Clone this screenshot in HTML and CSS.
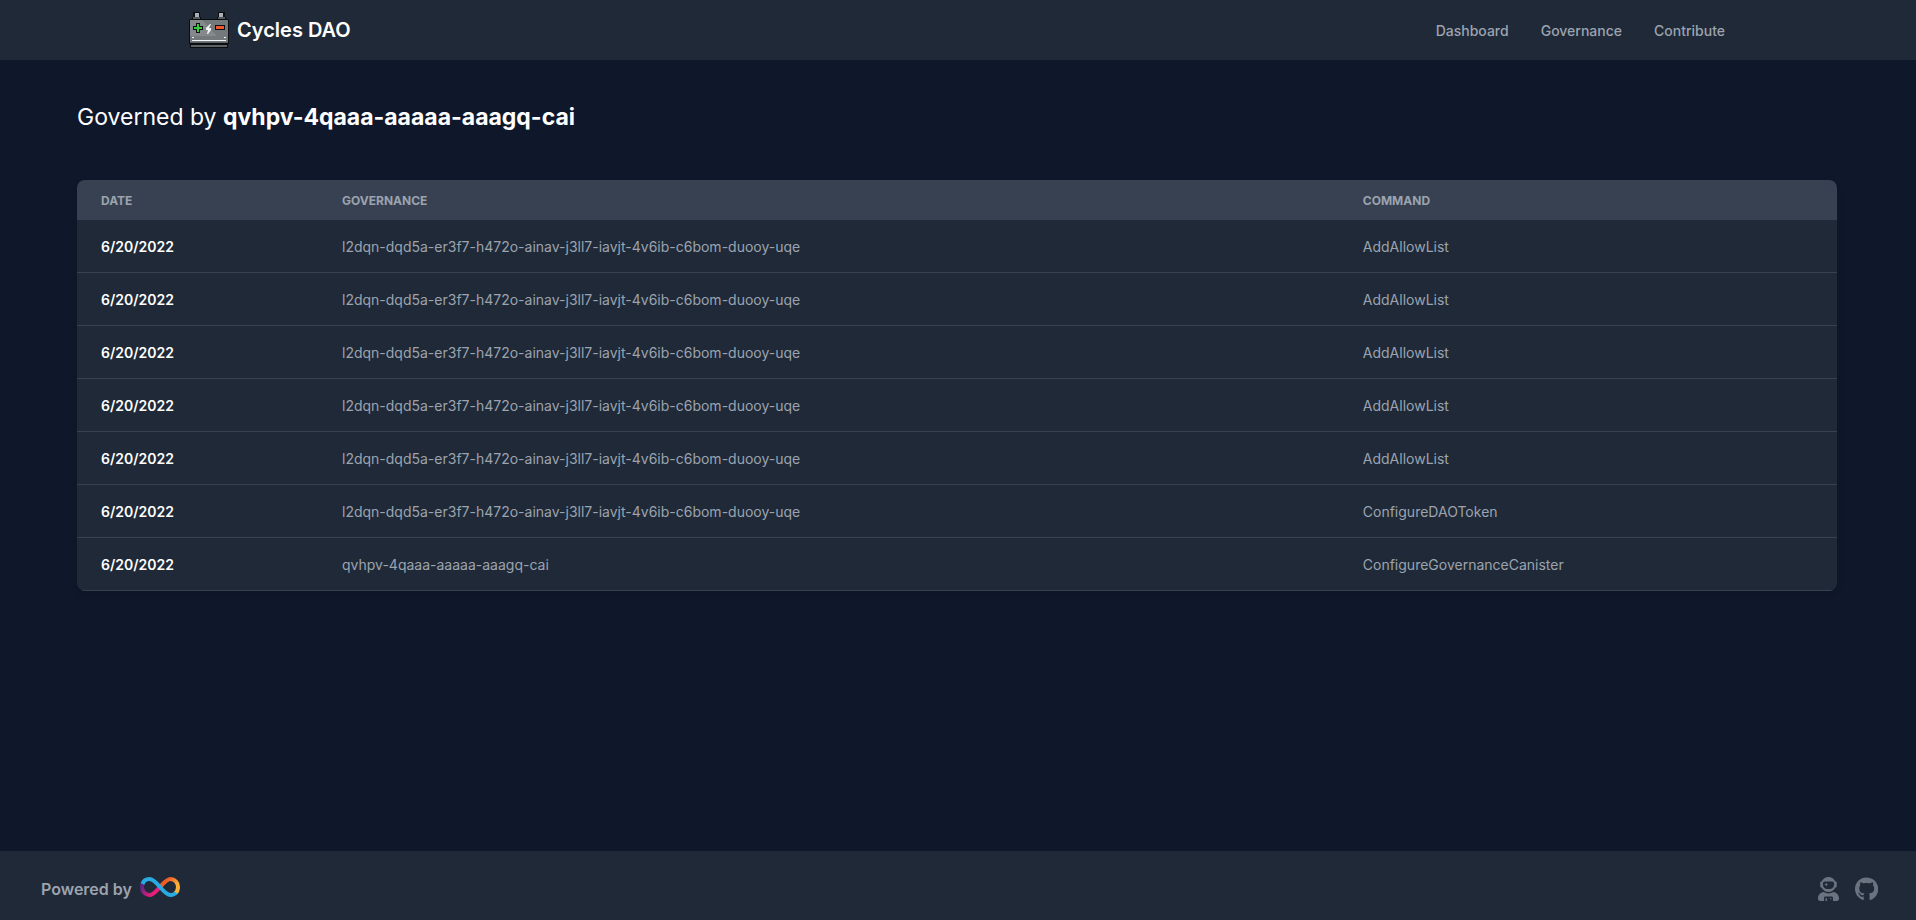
FILE: index.html
```html
<!DOCTYPE html>
<html lang="en">
<head>
    <meta charset="utf-8">
    <meta name="viewport" content="width=device-width, initial-scale=1">
    <title>Cycles DAO</title>
    <link rel="stylesheet" href="styles.css">
</head>
<body>
    <header class="navbar">
        <div class="navbar-inner">
            <a href="#" class="brand">
                <svg class="brand-logo" viewBox="0 0 40 36" aria-hidden="true">
                    <path fill="#0b0d10" d="M4 0h7v5h1v3H3V5h1zM29 0h7v5h1v3h-9V5h1zM1 7h38l1 1v24h-1v4H1v-4H0V8z"/>
                    <path fill="#a9b1b5" d="M6 1h4v4H6zM30 1h4v4h-4z"/>
                    <path fill="#53595d" d="M4 5h7v2H4zM29 5h7v2h-7z"/>
                    <path fill="#74797c" d="M1 8h38v23H1z"/>
                    <path fill="#85898b" d="M1 8h12l15 16H1z"/>
                    <path fill="#5d6264" d="M1 30h38v1H1zM2 33h36v2H2z"/>
                    <path fill="#0b0d10" d="M7 11h4v3h3v4h-3v3H7v-3H4v-4h3zM26 13h10v5H26z"/>
                    <path fill="#35cf3b" d="M8 12h2v3h3v2h-3v3H8v-3H5v-2h3z"/>
                    <path fill="#f0582a" d="M27 14h8v3h-8z"/>
                    <path fill="#f4f5f5" d="M21 12h1l-2 4h2v2l-3 4h-1l1-4h-2v-2zM3 25h2v1H3zM35 25h2v1h-2zM3 28h34v1H3z"/>
                </svg>
                <span>Cycles DAO</span>
            </a>
            <nav class="nav-links">
                <a href="#">Dashboard</a>
                <a href="#">Governance</a>
                <a href="#">Contribute</a>
            </nav>
        </div>
    </header>

    <main class="content">
        <h1 class="title">Governed by <strong>qvhpv-4qaaa-aaaaa-aaagq-cai</strong></h1>
        <div class="table-wrap">
            <table class="history">
                <thead>
                    <tr>
                        <th scope="col" class="col-date">Date</th>
                        <th scope="col" class="col-governance">Governance</th>
                        <th scope="col">Command</th>
                    </tr>
                </thead>
                <tbody>
                    <tr>
                        <th scope="row">6/20/2022</th>
                        <td>l2dqn-dqd5a-er3f7-h472o-ainav-j3ll7-iavjt-4v6ib-c6bom-duooy-uqe</td>
                        <td>AddAllowList</td>
                    </tr>
                    <tr>
                        <th scope="row">6/20/2022</th>
                        <td>l2dqn-dqd5a-er3f7-h472o-ainav-j3ll7-iavjt-4v6ib-c6bom-duooy-uqe</td>
                        <td>AddAllowList</td>
                    </tr>
                    <tr>
                        <th scope="row">6/20/2022</th>
                        <td>l2dqn-dqd5a-er3f7-h472o-ainav-j3ll7-iavjt-4v6ib-c6bom-duooy-uqe</td>
                        <td>AddAllowList</td>
                    </tr>
                    <tr>
                        <th scope="row">6/20/2022</th>
                        <td>l2dqn-dqd5a-er3f7-h472o-ainav-j3ll7-iavjt-4v6ib-c6bom-duooy-uqe</td>
                        <td>AddAllowList</td>
                    </tr>
                    <tr>
                        <th scope="row">6/20/2022</th>
                        <td>l2dqn-dqd5a-er3f7-h472o-ainav-j3ll7-iavjt-4v6ib-c6bom-duooy-uqe</td>
                        <td>AddAllowList</td>
                    </tr>
                    <tr>
                        <th scope="row">6/20/2022</th>
                        <td>l2dqn-dqd5a-er3f7-h472o-ainav-j3ll7-iavjt-4v6ib-c6bom-duooy-uqe</td>
                        <td>ConfigureDAOToken</td>
                    </tr>
                    <tr>
                        <th scope="row">6/20/2022</th>
                        <td>qvhpv-4qaaa-aaaaa-aaagq-cai</td>
                        <td>ConfigureGovernanceCanister</td>
                    </tr>
                </tbody>
            </table>
        </div>
    </main>

    <footer class="footer">
        <a href="#" class="powered">
            <span>Powered by</span>
            <svg class="infinity" viewBox="0 0 40 20" fill="none" stroke-width="4" aria-label="Internet Computer">
                <defs>
                    <linearGradient id="orange" x1="22" y1="2" x2="38" y2="16" gradientUnits="userSpaceOnUse">
                        <stop offset=".2" stop-color="#f15a24"/>
                        <stop offset=".7" stop-color="#fbb03b"/>
                    </linearGradient>
                    <linearGradient id="pink" x1="18" y1="18" x2="2" y2="4" gradientUnits="userSpaceOnUse">
                        <stop offset=".2" stop-color="#ed1e79"/>
                        <stop offset=".9" stop-color="#522785"/>
                    </linearGradient>
                </defs>
                <path stroke="url(#pink)" d="M20 10C17 13 13.500 18 9.500 18A7.500 8 0 0 1 2 10C2 7.500 3 5 5 3.500"/>
                <path stroke="url(#orange)" d="M20 10C23 7 26.500 2 30.500 2A7.500 8 0 0 1 38 10C38 12.500 37 15 35 16.500"/>
                <path stroke="#29abe2" d="M2.500 7C3.500 4 6 2 9.500 2C17 2 23 18 30.500 18C33 18 35 17 36 15.500"/>
            </svg>
        </a>
        <div class="social">
            <a href="#" aria-label="Profile">
                <svg viewBox="0 0 448 512" fill="currentColor"><path d="M64 224h13.500c24.700 56.500 80.900 96 146.500 96s121.800-39.500 146.500-96H384c8.800 0 16-7.200 16-16v-96c0-8.800-7.200-16-16-16h-13.500C345.800 39.500 289.600 0 224 0S102.200 39.500 77.500 96H64c-8.800 0-16 7.200-16 16v96c0 8.800 7.200 16 16 16zm40-88c0-22.100 21.500-40 48-40h144c26.500 0 48 17.900 48 40v24c0 53-43 96-96 96h-48c-53 0-96-43-96-96v-24zm72 72l12-36 36-12-36-12-12-36-12 36-36 12 36 12 12 36zm151.600 113.400C297.700 340.700 262.200 352 224 352s-73.700-11.300-103.600-30.600C52.900 328.500 0 385 0 453.400v10.600c0 26.500 21.500 48 48 48h80v-64c0-17.700 14.300-32 32-32h128c17.700 0 32 14.300 32 32v64h80c26.500 0 48-21.500 48-48v-10.600c0-68.400-52.900-124.900-120.400-132zM272 448c-8.800 0-16 7.200-16 16s7.200 16 16 16 16-7.200 16-16-7.200-16-16-16zm-96 0c-8.800 0-16 7.200-16 16v48h32v-48c0-8.800-7.200-16-16-16z"/></svg>
            </a>
            <a href="#" aria-label="GitHub">
                <svg viewBox="0 0 496 512" fill="currentColor"><path d="M244.800 8C106.100 8 0 113.300 0 252c0 110.900 69.800 205.800 169.500 239.200 12.800 2.300 17.300-5.600 17.300-12.100 0-6.200-.3-40.400-.3-61.400 0 0-70 15-84.700-29.800 0 0-11.400-29.100-27.800-36.600 0 0-22.900-15.700 1.600-15.400 0 0 24.900 2 38.600 25.800 21.900 38.600 58.600 27.500 72.900 20.900 2.300-16 8.800-27.100 16-33.700-55.900-6.200-112.300-14.300-112.300-110.500 0-27.500 7.600-41.300 23.600-58.900-2.600-6.500-11.100-33.300 2.600-67.900 20.900-6.500 69 27 69 27 20-5.600 41.500-8.500 62.800-8.500s42.800 2.900 62.800 8.500c0 0 48.100-33.600 69-27 13.700 34.700 5.200 61.400 2.600 67.900 16 17.700 25.800 31.500 25.800 58.900 0 96.500-58.900 104.200-114.800 110.500 9.200 7.900 17 22.900 17 46.400 0 33.700-.3 75.400-.3 83.600 0 6.500 4.600 14.400 17.300 12.100C428.200 457.800 496 362.900 496 252 496 113.300 383.500 8 244.800 8z"/></svg>
            </a>
        </div>
    </footer>
</body>
</html>
```
FILE: styles.css
```css
* {
    box-sizing: border-box;
}

body {
    display: flex;
    flex-direction: column;
    min-height: 100vh;
    margin: 0;
    background-color: #0f172a;
    color: #9ca3af;
    font-family: Inter, "Liberation Sans", sans-serif;
    font-size: 14px;
    line-height: 20px;
}

a {
    color: inherit;
    text-decoration: none;
}

svg {
    display: block;
}

/* header */
.navbar {
    padding: 12px 18px 12px 16px;
    background-color: #1f2937;
}

.navbar-inner {
    display: flex;
    align-items: center;
    justify-content: space-between;
    max-width: 1536px;
    margin: 0 auto;
}

.brand {
    display: flex;
    align-items: center;
    gap: 8px;
    color: #fff;
    font-size: 20px;
    font-weight: 600;
    line-height: 28px;
}

.brand-logo {
    width: 40px;
    height: 36px;
}

.nav-links {
    display: flex;
    gap: 32px;
    padding-top: 2px;
    font-weight: 500;
}

/* governance history */
.content {
    flex: 1;
    padding: 41px 79px 40px 77px;
}

.title {
    margin: 0 0 47px;
    color: #fff;
    font-size: 23px;
    font-weight: 400;
    line-height: 32px;
}

.title strong {
    font-weight: 700;
}

.table-wrap {
    overflow: hidden;
    border-radius: 8px;
    box-shadow: 0 4px 6px rgba(0, 0, 0, 0.1);
}

.history {
    width: 100%;
    border-collapse: collapse;
    table-layout: fixed;
    text-align: left;
}

.history thead {
    background-color: #374151;
    font-size: 12px;
    line-height: 16px;
    text-transform: uppercase;
}

.history thead th {
    padding: 13px 24px 11px;
    font-weight: 700;
}

.col-date {
    width: 241px;
}

.col-governance {
    width: 58%;
}

.history tbody tr {
    background-color: #1f2937;
    border-bottom: 1px solid #374151;
}

.history tbody th,
.history tbody td {
    padding: 17px 24px 15px;
}

.history tbody th {
    color: #fff;
    font-weight: 600;
}

/* footer */
.footer {
    display: flex;
    align-items: center;
    justify-content: space-between;
    padding: 24px 38px 17px 41px;
    background-color: #1f2937;
}

.powered {
    display: flex;
    gap: 8px;
    font-size: 16px;
    font-weight: 600;
    line-height: 28px;
}

.infinity {
    width: 40px;
    height: 20px;
    margin-top: 2px;
}

.social {
    display: flex;
    gap: 16px;
    color: #6b7280;
}

.social svg {
    height: 24px;
}
```
